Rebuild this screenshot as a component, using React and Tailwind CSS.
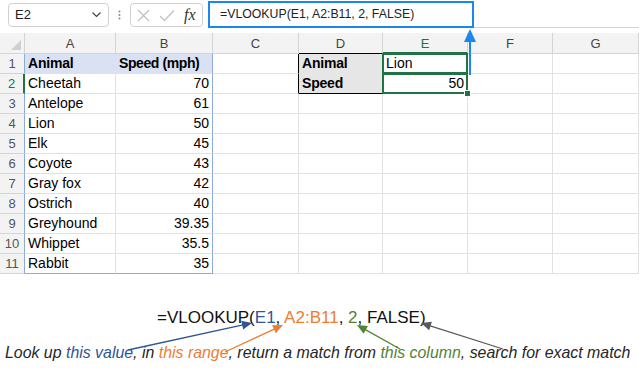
import React from 'react';

const animals = [
  ['Cheetah', '70'],
  ['Antelope', '61'],
  ['Lion', '50'],
  ['Elk', '45'],
  ['Coyote', '43'],
  ['Gray fox', '42'],
  ['Ostrich', '40'],
  ['Greyhound', '39.35'],
  ['Whippet', '35.5'],
  ['Rabbit', '35'],
];

const cell = 'h-[20px] border-r border-b border-[#e1e1e1] px-[3px] text-[14px] leading-[19px] text-black whitespace-nowrap';
const head = 'h-[21px] border-r border-b border-[#d4d4d4] bg-[#f3f3f3] text-center text-[13px] leading-[21px] text-[#444]';
const rowHead = 'h-[20px] border-r border-b border-[#d4d4d4] bg-[#f3f3f3] text-center text-[13px] leading-[19px] text-[#555]';

function Arrow({ x1, y1, x2, y2, color, size = 10, half = 4.5, width = 1.3 }) {
  const dx = x2 - x1;
  const dy = y2 - y1;
  const len = Math.hypot(dx, dy);
  const ux = dx / len;
  const uy = dy / len;
  const bx = x2 - ux * size;
  const by = y2 - uy * size;
  const px = -uy * half;
  const py = ux * half;
  return (
    <g>
      <line x1={x1} y1={y1} x2={bx + ux * 2} y2={by + uy * 2} stroke={color} strokeWidth={width} />
      <polygon points={`${x2},${y2} ${bx + px},${by + py} ${bx - px},${by - py}`} fill={color} />
    </g>
  );
}

export default function App() {
  return (
    <div className="relative h-[386px] w-[639px] overflow-hidden bg-white font-['Liberation_Sans',Arial,sans-serif]">
      {/* Formula bar */}
      <div className="flex h-[33px] items-start">
        <div className="ml-[8px] mt-[3px] flex h-[24px] w-[101px] items-center justify-between rounded-[4px] border border-[#d1d1d1] pl-[6px] pr-[7px]">
          <span className="text-[13px] text-[#222]">E2</span>
          <svg width="9" height="6" viewBox="0 0 9 6">
            <polyline points="0.5,0.5 4.5,4.5 8.5,0.5" fill="none" stroke="#444" strokeWidth="1.2" />
          </svg>
        </div>
        <div className="flex w-[21px] justify-center pt-[10px]">
          <svg width="3" height="10" viewBox="0 0 3 10">
            <circle cx="1.5" cy="1.5" r="1" fill="#888" />
            <circle cx="1.5" cy="5" r="1" fill="#888" />
            <circle cx="1.5" cy="8.5" r="1" fill="#888" />
          </svg>
        </div>
        <div className="mt-[3px] flex h-[24px] w-[73px] items-center rounded-[4px] border border-[#d1d1d1] pl-[6px]">
          <svg width="13" height="13" viewBox="0 0 13 13">
            <path d="M1 1 L12 12 M12 1 L1 12" stroke="#bdbdbd" strokeWidth="1.1" />
          </svg>
          <svg className="ml-[9px]" width="16" height="13" viewBox="0 0 16 13">
            <path d="M1 7 L5.5 11.5 L15 1.5" fill="none" stroke="#bdbdbd" strokeWidth="1.1" />
          </svg>
          <span className="ml-[9px] font-['Liberation_Serif',serif] text-[16px] italic leading-none text-[#333]">fx</span>
        </div>
        <div className="ml-[5px] mt-[1px] flex h-[27px] w-[266px] items-center border-2 border-[#1a86f0] pl-[10px] text-[12.3px] text-[#222]">
          =VLOOKUP(E1, A2:B11, 2, FALSE)
        </div>
        <div className="h-[28px] flex-1 border-b border-[#d6d6d6]" />
      </div>

      {/* Sheet */}
      <div className="grid grid-cols-[25px_91px_97px_86px_84px_85px_85px_86px]">
        <div className="relative h-[21px] border-r border-b border-[#d4d4d4] bg-[#f3f3f3]">
          <svg className="absolute bottom-[3px] right-[3px]" width="10" height="10" viewBox="0 0 10 10">
            <polygon points="10,0 10,10 0,10" fill="#cfcfcf" />
          </svg>
        </div>
        <div className={head}>A</div>
        <div className={head}>B</div>
        <div className={head}>C</div>
        <div className={`${head} border-b-black`}>D</div>
        <div className={`${head} border-b-2 border-b-[#217346] bg-[#e1e1e1] text-[#217346]`}>E</div>
        <div className={head}>F</div>
        <div className={head}>G</div>

        {/* Row 1 */}
        <div className={`${rowHead} border-r-[#8eaadb]`}>1</div>
        <div className={`${cell} bg-[#d9e1f2] font-bold tracking-[-0.2px]`}>Animal</div>
        <div className={`${cell} border-r-[#8eaadb] bg-[#d9e1f2] font-bold tracking-[-0.4px]`}>Speed (mph)</div>
        <div className={`${cell} border-r-black`} />
        <div className={`${cell} border-b-transparent bg-[#e7e6e6] font-bold tracking-[-0.2px]`}>Animal</div>
        <div className={`${cell} relative`}>
          Lion
          <div className="absolute inset-x-[-1px] top-[-1px] bottom-[-1px] border-2 border-[#217346]" />
        </div>
        <div className={cell} />
        <div className={cell} />

        {/* Row 2 onward */}
        {animals.map(([name, speed], i) => {
          const n = i + 2;
          const last = n === 11;
          return (
            <React.Fragment key={name}>
              <div
                className={
                  n === 2
                    ? `${rowHead} border-r-2 border-r-[#217346] bg-[#e1e1e1] text-[#217346]`
                    : `${rowHead} border-r-[#8eaadb]`
                }
              >
                {n}
              </div>
              <div className={last ? `${cell} border-b-[#8eaadb]` : cell}>{name}</div>
              <div
                className={
                  last
                    ? `${cell} border-r-[#8eaadb] border-b-[#8eaadb] text-right`
                    : `${cell} border-r-[#8eaadb] text-right`
                }
              >
                {speed}
              </div>
              <div className={n === 2 ? `${cell} border-r-black` : cell} />
              {n === 2 ? (
                <div className={`${cell} border-b-black bg-[#e7e6e6] font-bold tracking-[-0.2px]`}>Speed</div>
              ) : (
                <div className={cell} />
              )}
              {n === 2 ? (
                <div className={`${cell} relative text-right`}>
                  50
                  <div className="absolute inset-x-[-1px] top-[-1px] bottom-[-1px] border-2 border-[#217346]" />
                  <div className="absolute bottom-[-4px] right-[-4px] h-[7px] w-[7px] border border-white bg-[#217346]" />
                </div>
              ) : (
                <div className={cell} />
              )}
              <div className={cell} />
              <div className={cell} />
            </React.Fragment>
          );
        })}
      </div>

      {/* Explanation */}
      <div className="flex flex-col">
        <div className="mt-[34px] h-[20px] pl-[157px] text-[17px] leading-[20px] text-[#111]">
          =VLOOKUP(<span className="text-[#2f5597]">E1</span>, <span className="text-[#ed7d31]">A2:B11</span>,{' '}
          <span className="text-[#548235]">2</span>, FALSE)
        </div>
        <div className="mt-[15px] h-[20px] whitespace-nowrap pl-[5px] text-[15.9px] italic leading-[20px] text-[#262626]">
          Look up <span className="text-[#2f5597]">this value</span>, in{' '}
          <span className="text-[#ed7d31]">this range</span>, return a match from{' '}
          <span className="text-[#548235]">this column</span>, search for exact match
        </div>
      </div>

      {/* Arrows */}
      <svg className="pointer-events-none absolute left-0 top-0" width="639" height="386" viewBox="0 0 639 386">
        <Arrow x1={470} y1={75} x2={470} y2={29} color="#1a86f0" size={13} half={6} width={2} />
        <Arrow x1={128} y1={350} x2={252} y2={323} color="#2f5597" />
        <Arrow x1={225} y1={352} x2={283} y2={325} color="#ed7d31" />
        <Arrow x1={400} y1={349} x2={357} y2={325} color="#548235" />
        <Arrow x1={503} y1={349} x2={421} y2={323} color="#595959" />
      </svg>
    </div>
  );
}
